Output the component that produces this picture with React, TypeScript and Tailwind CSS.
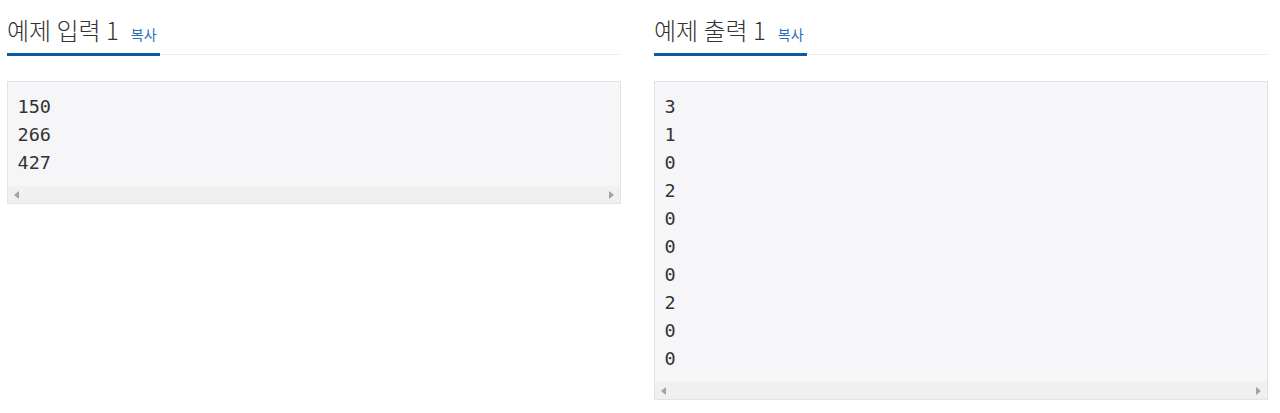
const samples = [
  { title: '예제 입력 1', lines: ['150', '266', '427'] },
  { title: '예제 출력 1', lines: ['3', '1', '0', '2', '0', '0', '0', '2', '0', '0'] },
];

const SampleBox = ({ title, lines }: { title: string; lines: string[] }) => (
  <section className="flex-1 min-w-0">
    {/* Headline */}
    <div className="border-b border-[#eeeeee] pt-[14px]">
      <div className="inline-flex items-baseline gap-[12px] border-b-[3px] border-[#0c5aa6] -mb-[2px] pb-[7px] pr-[3px]">
        <h2 className="text-[24px] leading-[32px] font-light text-[#333] font-['Noto_Sans_CJK_KR','Noto_Sans',sans-serif]">{title}</h2>
        <button className="text-[14px] text-[#2a6ebd] font-['Noto_Sans_CJK_KR','Noto_Sans',sans-serif]">복사</button>
      </div>
    </div>

    {/* Pre */}
    <div className="mt-[26px] border border-[#e3e3e6] bg-[#f6f6f8]">
      <pre className="px-[9.5px] pt-[11px] pb-[9px] text-[18.5px] leading-[28px] text-[#333] font-['DejaVu_Sans_Mono',monospace]">
        {lines.join('\n')}
      </pre>
      <div className="h-[17px] bg-[#f0f0f0] flex items-center justify-between px-[6px]">
        <svg width="5" height="8" viewBox="0 0 5 8"><path d="M5 0 L0 4 L5 8 Z" fill="#a3a3a3" /></svg>
        <svg width="5" height="8" viewBox="0 0 5 8"><path d="M0 0 L5 4 L0 8 Z" fill="#a3a3a3" /></svg>
      </div>
    </div>
  </section>
);

export default function App() {
  return (
    <main className="w-[1280px] bg-white pl-[7px] pr-[12px] flex gap-[33px] items-start">
      {samples.map((s) => (
        <SampleBox key={s.title} title={s.title} lines={s.lines} />
      ))}
    </main>
  );
}
